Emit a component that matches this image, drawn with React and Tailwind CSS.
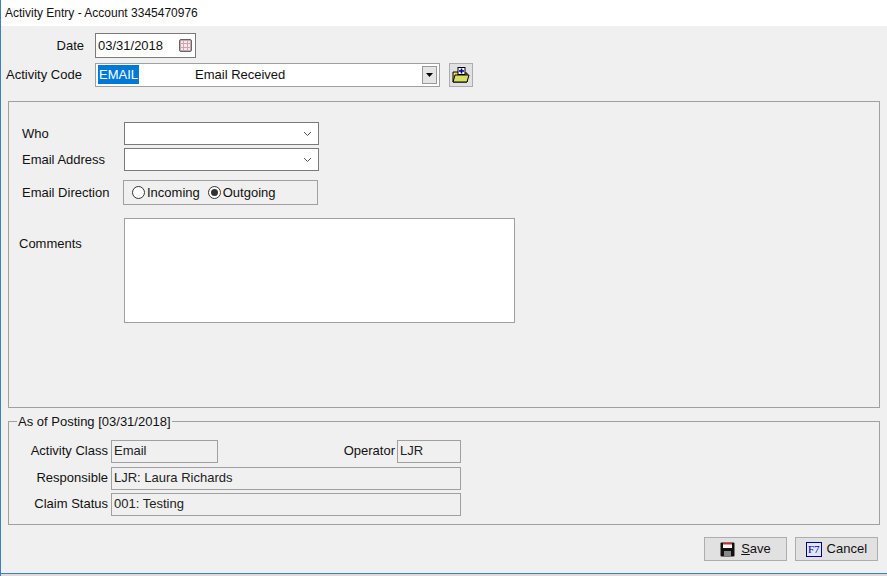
import React from 'react';

const font = { fontFamily: '"Liberation Sans", Arial, sans-serif' };

const Chevron = () => (
  <svg width="9" height="6" viewBox="0 0 9 6" className="text-gray-600">
    <path d="M1 1l3.5 3.5L8 1" fill="none" stroke="currentColor" strokeWidth="1" />
  </svg>
);

const Combo = ({ w }) => (
  <div className={`h-[23px] ${w} bg-white border border-[#7a7a7a] flex items-center justify-end pr-[6px]`}>
    <Chevron />
  </div>
);

const ReadOnly = ({ w, children }) => (
  <div className={`h-[23px] ${w} bg-[#f0f0f0] border border-[#a0a0a0] px-[2px] flex items-center text-[13px] text-[#222]`}>
    {children}
  </div>
);

const Radio = ({ checked, label }) => (
  <label className="flex items-center gap-[2px]">
    <span className="w-[13px] h-[13px] rounded-full border border-[#333] bg-white flex items-center justify-center">
      {checked && <span className="w-[7px] h-[7px] rounded-full bg-[#333]" />}
    </span>
    {label}
  </label>
);

export default function App() {
  return (
    <div style={font} className="w-[887px] h-[576px] bg-[#f0f0f0] border-l border-[#3c7fc4] text-[13px] text-[#111] flex flex-col overflow-hidden">
      <div className="h-[26px] bg-white flex items-center pl-[4px] text-[12px]">Activity Entry - Account 3345470976</div>

      <div className="flex items-center h-[29px] mt-[5px]">
        <span className="w-[84px] text-right pr-[1px]">Date</span>
        <div className="ml-[10px] w-[101px] h-[25px] bg-white border border-[#7a7a7a] flex items-center justify-between pl-[2px] pr-[3px]">
          <span>03/31/2018</span>
          <span className="w-[13px] h-[13px] border border-[#666] bg-[#c9a7b0] rounded-[2px] grid grid-cols-3 gap-px p-px">
            {Array.from({ length: 9 }).map((_, i) => <span key={i} className="bg-[#f4e6ea]" />)}
          </span>
        </div>
      </div>

      <div className="flex items-center h-[25px] mt-[2px]">
        <span className="w-[84px] pl-[5px]">Activity Code</span>
        <div className="ml-[10px] w-[345px] h-[24px] bg-white border border-[#a0a0a0] flex items-center pl-[2px] pr-[2px]">
          <span className="bg-[#0078d7] text-white px-px">EMAIL</span>
          <span className="ml-[56px] flex-1">Email Received</span>
          <span className="w-[15px] h-[18px] border border-[#999] bg-[#e5e5e5] flex items-center justify-center">
            <svg width="7" height="4" viewBox="0 0 7 4"><path d="M0 0h7L3.5 4z" fill="#000" /></svg>
          </span>
        </div>
        <div className="ml-[9px] w-[24px] h-[24px] bg-[#e1e1e1] border border-[#adadad] flex items-center justify-center">
          <svg width="18" height="16" viewBox="0 0 18 16">
            <path d="M1 5h5l1 1h8v9H1z" fill="#f0d860" stroke="#000" />
            <path d="M3 8h14l-2 7H1z" fill="#d8e060" stroke="#000" />
            <rect x="6" y="0.5" width="7" height="7" fill="#fff" stroke="#000" />
            <path d="M9.5 1.5v5M7 4h5" stroke="#00008b" strokeWidth="1.6" />
          </svg>
        </div>
      </div>

      <div className="mx-[7px] mt-[14px] h-[307px] border border-[#a0a0a0] flex flex-col">
        <div className="flex items-center mt-[20px]">
          <span className="w-[115px] pl-[13px]">Who</span>
          <Combo w="w-[195px]" />
        </div>
        <div className="flex items-center mt-[3px]">
          <span className="w-[115px] pl-[13px]">Email Address</span>
          <Combo w="w-[195px]" />
        </div>
        <div className="flex items-start mt-[9px]">
          <span className="w-[114px] pl-[13px] mt-[3px]">Email Direction</span>
          <div className="w-[195px] h-[25px] border border-[#a0a0a0] flex items-center gap-[8px] pl-[8px]">
            <Radio label="Incoming" />
            <Radio checked label="Outgoing" />
          </div>
        </div>
        <div className="flex items-start mt-[13px]">
          <span className="w-[115px] pl-[10px] mt-[16px]">Comments</span>
          <div className="w-[391px] h-[105px] bg-white border border-[#a0a0a0]" />
        </div>
      </div>

      <fieldset className="mx-[7px] mt-[4px] h-[113px] border border-[#a0a0a0] px-[12px] pt-[8px]">
        <legend className="px-[1px] -ml-[4px]">As of Posting [03/31/2018]</legend>
        <div className="flex items-center">
          <span className="w-[90px] text-right pr-[3px]">Activity Class</span>
          <ReadOnly w="w-[107px]">Email</ReadOnly>
          <span className="ml-[121px] w-[58px] text-right pr-[2px]">Operator</span>
          <ReadOnly w="w-[64px]">LJR</ReadOnly>
        </div>
        <div className="flex items-center mt-[4px]">
          <span className="w-[90px] text-right pr-[3px]">Responsible</span>
          <ReadOnly w="w-[350px]">LJR: Laura Richards</ReadOnly>
        </div>
        <div className="flex items-center mt-[3px]">
          <span className="w-[90px] text-right pr-[3px]">Claim Status</span>
          <ReadOnly w="w-[350px]">001: Testing</ReadOnly>
        </div>
      </fieldset>

      <div className="flex justify-end gap-[8px] pr-[9px] mt-[12px]">
        <button className="w-[83px] h-[24px] bg-[#e1e1e1] border border-[#adadad] flex items-center justify-center gap-[6px]">
          <svg width="15" height="15" viewBox="0 0 15 15">
            <rect x="0.5" y="0.5" width="14" height="14" rx="1" fill="#111" />
            <rect x="3" y="1" width="9" height="5" fill="#fff" />
            <rect x="3" y="1" width="9" height="1.5" fill="#d22" />
            <rect x="4" y="9" width="7" height="5" fill="#888" />
          </svg>
          <span><u>S</u>ave</span>
        </button>
        <button className="w-[83px] h-[24px] bg-[#e1e1e1] border border-[#adadad] flex items-center justify-center gap-[5px]">
          <span className="border border-[#00008b] bg-[#dfe6ff] text-[#00008b] text-[11px] leading-[13px] px-[1px]" style={{ fontFamily: '"Liberation Serif", serif' }}>F7</span>
          <span>Cancel</span>
        </button>
      </div>
      <div className="mt-auto h-[3px] border-t border-[#3c7fc4] bg-[#ddd]" />
    </div>
  );
}
